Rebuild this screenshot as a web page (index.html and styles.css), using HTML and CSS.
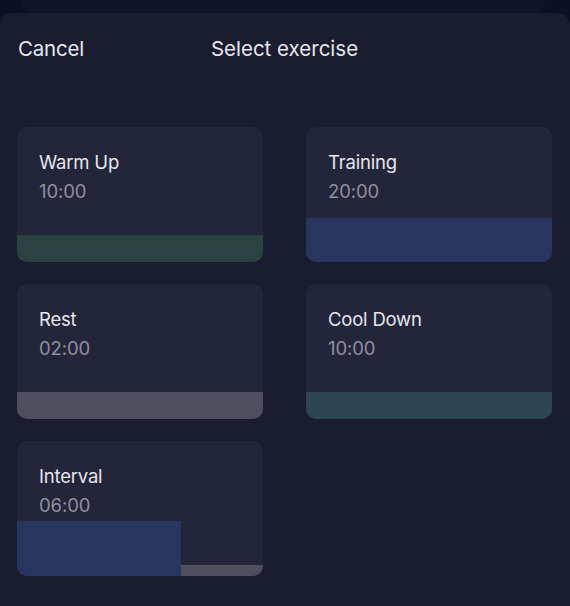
FILE: index.html
```html
<!DOCTYPE html>
<html lang="en">
<head>
    <meta charset="UTF-8">
    <meta name="viewport" content="width=device-width, initial-scale=1.0">
    <title>Select exercise</title>
    <link rel="stylesheet" href="styles.css">
</head>
<body>

<div class="backdrop">
    <div class="backdrop-card"></div>
</div>

<div class="sheet">
    <div class="sheet-header">
        <div class="cancel">Cancel</div>
        <div class="title">Select exercise</div>
        <div></div>
    </div>

    <div class="exercise-grid">
        <div class="exercise">
            <div class="name">Warm Up</div>
            <div class="time">10:00</div>
            <div class="bar warm"></div>
        </div>
        <div class="exercise">
            <div class="name">Training</div>
            <div class="time">20:00</div>
            <div class="bar training"></div>
        </div>
        <div class="exercise">
            <div class="name">Rest</div>
            <div class="time">02:00</div>
            <div class="bar rest"></div>
        </div>
        <div class="exercise">
            <div class="name">Cool Down</div>
            <div class="time">10:00</div>
            <div class="bar cool"></div>
        </div>
        <div class="exercise">
            <div class="name">Interval</div>
            <div class="time">06:00</div>
            <div class="bar interval">
                <div class="interval-work"></div>
                <div class="interval-rest"></div>
            </div>
        </div>
    </div>
</div>

</body>
</html>
```

FILE: styles.css
```css
body {
    font-family: Inter, "Noto Sans", sans-serif;
    background-color: #0c1024;
    color: #e6e6ec;
    margin: 0;
    height: 606px;
    display: flex;
    flex-direction: column;
    overflow: hidden;
}
.backdrop {
    height: 13px;
    padding: 0 25px 0 22px;
}
.backdrop-card {
    height: 13px;
    background-color: #121529;
    border-radius: 0 0 12px 12px;
}
.sheet {
    flex: 1;
    background-color: #1a1c30;
    border-radius: 12px 12px 0 0;
    padding: 0 18px 0 17px;
}
.sheet-header {
    display: grid;
    grid-template-columns: 1fr auto 1fr;
    align-items: center;
    height: 71px;
    font-size: 20.5px;
}
.cancel {
    padding-left: 1px;
    letter-spacing: -0.2px;
}
.exercise-grid {
    display: grid;
    grid-template-columns: 246px 246px;
    grid-auto-rows: 135px;
    column-gap: 43px;
    row-gap: 22px;
    margin-top: 43px;
}
.exercise {
    position: relative;
    background-color: #23253a;
    border-radius: 10px;
    overflow: hidden;
    padding: 24px 22px 0;
}
.name {
    font-size: 18.5px;
    line-height: 22px;
    letter-spacing: -0.2px;
}
.time {
    font-size: 18.5px;
    line-height: 22px;
    margin-top: 7px;
    color: #8f909c;
    letter-spacing: -0.1px;
}
.bar {
    position: absolute;
    left: 0;
    right: 0;
    bottom: 0;
    height: 27px;
}
.bar.warm {
    background-color: #2a4340;
}
.bar.training {
    height: 44px;
    background-color: #27355f;
}
.bar.rest {
    background-color: #4e4f5e;
}
.bar.cool {
    background-color: #2e4555;
}
.bar.interval {
    height: 55px;
    display: flex;
    align-items: flex-end;
}
.interval-work {
    width: 164px;
    height: 55px;
    background-color: #27355f;
}
.interval-rest {
    flex: 1;
    height: 11px;
    background-color: #4e4f5e;
}
```
